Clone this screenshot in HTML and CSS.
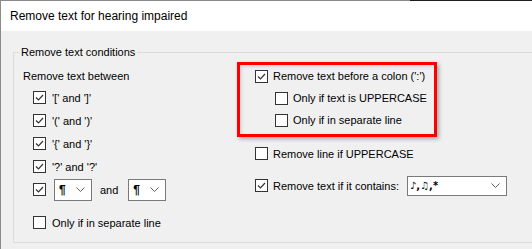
FILE: index.html
```html
<!DOCTYPE html>
<html lang="en">
<head>
  <meta charset="UTF-8">
  <meta name="viewport" content="width=device-width, initial-scale=1.0">
  <title>Remove text for hearing impaired</title>
  <link rel="stylesheet" href="styles.css">
</head>
<body>

  <div class="window">
    <div class="titlebar">Remove text for hearing impaired</div>

    <div class="content">
      <fieldset class="group">
        <legend>Remove text conditions</legend>

        <div class="columns">
          <!-- left column: brackets -->
          <div class="col-left">
            <div class="heading">Remove text between</div>

            <div class="check-row">
              <span class="box checked"><svg viewBox="0 0 11 11"><path d="M2 5.5 L4.5 8 L9 3"/></svg></span>
              <span>'[' and ']'</span>
            </div>
            <div class="check-row">
              <span class="box checked"><svg viewBox="0 0 11 11"><path d="M2 5.5 L4.5 8 L9 3"/></svg></span>
              <span>'(' and ')'</span>
            </div>
            <div class="check-row">
              <span class="box checked"><svg viewBox="0 0 11 11"><path d="M2 5.5 L4.5 8 L9 3"/></svg></span>
              <span>'{' and '}'</span>
            </div>
            <div class="check-row">
              <span class="box checked"><svg viewBox="0 0 11 11"><path d="M2 5.5 L4.5 8 L9 3"/></svg></span>
              <span>'?' and '?'</span>
            </div>
            <div class="check-row pair-row">
              <span class="box checked"><svg viewBox="0 0 11 11"><path d="M2 5.5 L4.5 8 L9 3"/></svg></span>
              <div class="combo small">
                <span class="value pilcrow">¶</span>
                <svg class="chevron" viewBox="0 0 9 5"><path d="M0.5 0.5 L4.5 4.5 L8.5 0.5"/></svg>
              </div>
              <span class="and">and</span>
              <div class="combo small">
                <span class="value pilcrow">¶</span>
                <svg class="chevron" viewBox="0 0 9 5"><path d="M0.5 0.5 L4.5 4.5 L8.5 0.5"/></svg>
              </div>
            </div>

            <div class="check-row separate">
              <span class="box"></span>
              <span>Only if in separate line</span>
            </div>
          </div>

          <!-- right column: colon + other rules -->
          <div class="col-right">
            <div class="highlight">
              <div class="check-row">
                <span class="box checked"><svg viewBox="0 0 11 11"><path d="M2 5.5 L4.5 8 L9 3"/></svg></span>
                <span>Remove text before a colon (':')</span>
              </div>
              <div class="check-row sub">
                <span class="box"></span>
                <span>Only if text is UPPERCASE</span>
              </div>
              <div class="check-row sub">
                <span class="box"></span>
                <span>Only if in separate line</span>
              </div>
            </div>

            <div class="check-row line-row">
              <span class="box"></span>
              <span>Remove line if UPPERCASE</span>
            </div>
            <div class="check-row contains-row">
              <span class="box checked"><svg viewBox="0 0 11 11"><path d="M2 5.5 L4.5 8 L9 3"/></svg></span>
              <span>Remove text if it contains:</span>
              <div class="combo wide">
                <span class="value notes">♪,♫,*</span>
                <svg class="chevron" viewBox="0 0 9 5"><path d="M0.5 0.5 L4.5 4.5 L8.5 0.5"/></svg>
              </div>
            </div>
          </div>
        </div>
      </fieldset>
    </div>
  </div>

</body>
</html>
```

FILE: styles.css
```css
* {
  box-sizing: border-box;
}
body, html {
  margin: 0;
  padding: 0;
  font-family: "Liberation Sans", Arial, sans-serif;
  font-size: 11px;
  color: #000;
  background: #f0f0f0;
}

.window {
  height: 249px;
  border-left: 1px solid #8a8a8a;
  border-top: 1px solid #8a8a8a;
  border-image: linear-gradient(to right, #8a8a8a 77%, #1c1c1c 77%) 1;
  border-right: 0;
  border-bottom: 0;
  overflow: hidden;
}

.titlebar {
  background: #fff;
  height: 30px;
  padding-left: 9px;
  font-size: 12px;
  line-height: 30px;
}

.content {
  padding: 13px 0 0 12px;
}

.group {
  margin: 0;
  padding: 0 0 8px 0;
  width: 560px;
  border: 1px solid #dcdcdc;
}
.group legend {
  margin-left: 5px;
  padding: 0 2px;
  line-height: 16px;
}

.columns {
  display: flex;
  padding-top: 2px;
}

.col-left {
  width: 223px;
  padding-top: 6px;
}
.heading {
  padding-left: 9px;
  line-height: 16px;
  margin-bottom: 2px;
}

.check-row {
  display: flex;
  align-items: center;
  height: 23px;
  white-space: nowrap;
}
.col-left .check-row {
  padding-left: 19px;
}

.box {
  width: 13px;
  height: 13px;
  border: 1px solid #333;
  background: #fff;
  margin-right: 6px;
  flex-shrink: 0;
  display: flex;
}
.col-right .box {
  margin-right: 5px;
}
.box svg {
  width: 11px;
  height: 11px;
  fill: none;
  stroke: #333;
  stroke-width: 1.2;
}

.combo {
  height: 22px;
  border: 1px solid #7a7a7a;
  background: #fff;
  display: flex;
  align-items: center;
  justify-content: space-between;
  padding: 0 6px 0 4px;
}
.combo.small {
  width: 38px;
  margin-left: 2px;
}
.combo.wide {
  width: 100px;
  height: 20px;
  margin-left: 8px;
  padding-left: 2px;
}
.chevron {
  width: 9px;
  height: 5px;
  fill: none;
  stroke: #606060;
  stroke-width: 1;
}
.pilcrow {
  font-weight: bold;
  font-size: 12px;
}
.notes {
  font-family: "DejaVu Sans", sans-serif;
  font-size: 10px;
  font-weight: bold;
}
.and {
  margin: 0 8px;
}

.separate {
  margin-top: 10px;
}

.col-right {
  flex: 1;
}
.highlight {
  width: 200px;
  border: 3px solid #f00;
  padding: 0 0 3px 15px;
  box-shadow: 2px 2px 4px rgba(0, 0, 0, 0.3), inset 2px 2px 3px rgba(0, 0, 0, 0.1);
}
.highlight .check-row {
  height: 22px;
}
.highlight .sub {
  padding-left: 20px;
}
.line-row {
  margin-top: 5px;
  padding-left: 18px;
}
.contains-row {
  margin-top: 9px;
  padding-left: 18px;
}
```
